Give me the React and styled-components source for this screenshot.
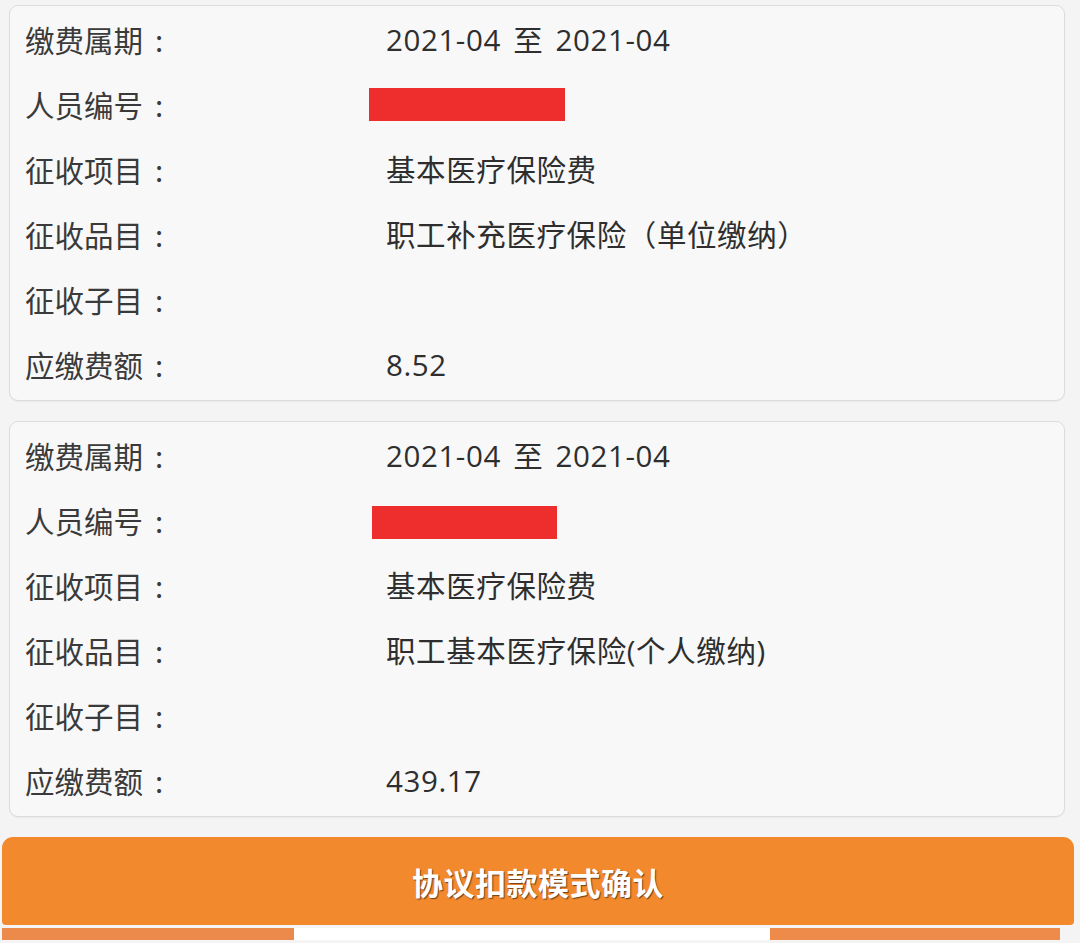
import styled, { createGlobalStyle } from 'styled-components';

const GlobalStyle = createGlobalStyle`
    html, body {
        margin: 0;
        padding: 0;
        background: #f4f4f5;
    }
    body {
        font-family: "Noto Sans CJK SC", "Noto Sans", sans-serif;
        color: #333333;
    }
`

const Page = styled.div`
    width: 1080px;
    height: 943px;
    overflow: hidden;
    display: flex;
    flex-direction: column;
    padding-top: 5px;
    box-sizing: border-box;
`

const Card = styled.div`
    margin: 0 15px 20px 9px;
    padding: 1px 0 3px 15px;
    background: #f8f8f8;
    border: 1.5px solid #dcdcdc;
    border-radius: 9px;
    box-shadow: 0 1px 1px rgba(0, 0, 0, 0.04);
`

const Row = styled.div`
    display: grid;
    grid-template-columns: 361px 1fr;
    align-items: center;
    height: 65px;
    font-size: 29.5px;
    line-height: 1;
`

const Label = styled.span`
    display: flex;
    color: #3a3a3a;
`

const Colon = styled.span`
    margin-left: 12px;
`

const Value = styled.span`
    font-family: "Open Sans", "Noto Sans CJK SC", sans-serif;
    color: #2e2e2e;
    letter-spacing: 0.6px;
    word-spacing: 4px;
`

const Redacted = styled.div`
    width: ${props => props.w}px;
    height: 33px;
    margin-left: ${props => props.dx}px;
    margin-top: ${props => props.dy}px;
    background: #ee2d2d;
`

const ConfirmButton = styled.button`
    margin: 0 6px 0 2px;
    height: 88px;
    border: none;
    border-radius: 11px 11px 4px 4px;
    background: #f3892d;
    color: #ffffff;
    font-family: "Noto Sans CJK SC", sans-serif;
    font-size: 31px;
    font-weight: 700;
    letter-spacing: 0.5px;
    text-shadow: 1px 1px 1px rgba(60, 40, 20, 0.75);
    cursor: pointer;
`

const TabStrip = styled.div`
    margin: 3px 20px 0 2px;
    height: 12px;
    display: grid;
    grid-template-columns: 292px 1fr 290px;
`

const TabPiece = styled.div`
    background: ${props => props.color};
`

const records = [
    { project: '职工补充医疗保险（单位缴纳）', amount: '8.52', bar: 196, dx: -17, dy: 0 },
    { project: '职工基本医疗保险(个人缴纳)', amount: '439.17', bar: 185, dx: -14, dy: 4 },
]

function Field({ name, children }) {
    return (
        <Row>
            <Label>{name}<Colon>:</Colon></Label>
            {children}
        </Row>
    )
}

function PaymentCard({ record }) {
    return (
        <Card>
            <Field name="缴费属期"><Value>2021-04 至 2021-04</Value></Field>
            <Field name="人员编号"><Redacted w={record.bar} dx={record.dx} dy={record.dy} /></Field>
            <Field name="征收项目"><Value>基本医疗保险费</Value></Field>
            <Field name="征收品目"><Value>{record.project}</Value></Field>
            <Field name="征收子目"><Value /></Field>
            <Field name="应缴费额"><Value>{record.amount}</Value></Field>
        </Card>
    )
}

export default function App() {
    return (
        <Page>
            <GlobalStyle />
            {records.map((r, i) => <PaymentCard key={i} record={r} />)}
            <ConfirmButton>协议扣款模式确认</ConfirmButton>
            <TabStrip>
                <TabPiece color="#ec8a4c" />
                <TabPiece color="#ffffff" />
                <TabPiece color="#ee8a4a" />
            </TabStrip>
        </Page>
    )
}
